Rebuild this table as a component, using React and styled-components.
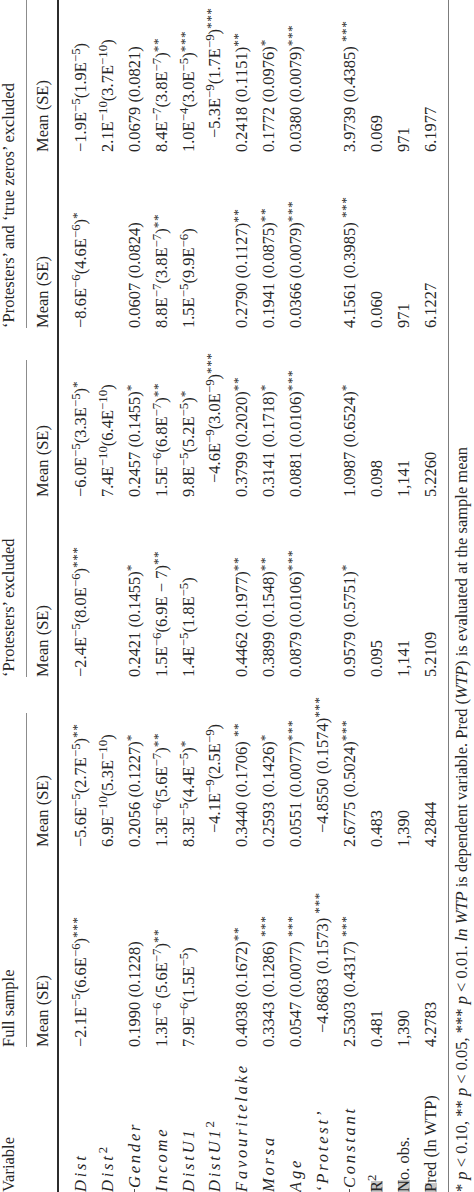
import React from 'react';
import styled, { createGlobalStyle } from 'styled-components';

const GlobalStyle = createGlobalStyle`
  html, body {
    margin: 0;
    padding: 0;
    background: #fff;
  }
  body {
    overflow: hidden;
  }
`;

// the table is printed sideways: build it upright (1192 x 474), then turn it a quarter left
const Page = styled.div`
  width: 474px;
  height: 1192px;
  overflow: hidden;
  background: #fff;
`;

const Sheet = styled.div`
  width: 1192px;
  height: 474px;
  transform-origin: 0 0;
  transform: translate(0, 1192px) rotate(-90deg);
  display: flex;
  flex-direction: column;
  font-family: 'Liberation Serif', 'Times New Roman', serif;
  font-size: 16.5px;
  color: #262626;
`;

const COLS = '145px 200px 170px 180px 169px 176px 152px';

const GroupRow = styled.div`
  display: grid;
  grid-template-columns: ${COLS};
  line-height: 18px;
`;

const GroupCell = styled.div`
  grid-column: ${p => p.$span};
  margin-right: ${p => p.$gap || 0}px;
  padding-bottom: 8px;
  border-bottom: 1px solid ${p => (p.$ruled ? '#8c8c8c' : 'transparent')};
  white-space: nowrap;
`;

const SubRow = styled.div`
  display: grid;
  grid-template-columns: ${COLS};
  line-height: 18px;
  padding: 7px 0 5px;
  border-bottom: 2px solid #2c2c2c;
  white-space: nowrap;
`;

const Body = styled.div`
  padding: 9px 0 3.4px;
  border-bottom: 1px solid #7c7c7c;
`;

const Row = styled.div`
  display: grid;
  grid-template-columns: ${COLS};
  height: 26.9px;
  line-height: 26.9px;
  white-space: nowrap;
`;

const Label = styled.div`
  font-style: ${p => (p.$math ? 'italic' : 'normal')};
  letter-spacing: ${p => (p.$math ? '2.8px' : '0')};
`;

const Cell = styled.div`
  padding-left: ${p => (p.$indent ? 14 : 0)}px;
`;

const Sup = styled.span`
  font-size: ${p => (p.$star ? '0.8em' : '0.78em')};
  vertical-align: ${p => (p.$star ? '0.4em' : '0.48em')};
  line-height: 0;
  letter-spacing: ${p => (p.$star ? '0.5px' : '0')};
  font-style: normal;
`;

const Smudge = styled.span`
  display: inline-block;
  height: 12px;
  line-height: 12px;
  background: #c6c6c6;
`;

const Tick = styled.span`
  display: inline-block;
  width: 3px;
  height: 1px;
  margin-right: 1px;
  vertical-align: 0.3em;
  background: #555;
`;

const Note = styled.div`
  margin-top: 3px;
  line-height: 20px;
  white-space: nowrap;

  i {
    font-style: italic;
  }
`;

const rows = [
  {
    label: 'Dist', math: true,
    cells: ['−2.1E^−5(6.6E^−6)^***', '−5.6E^−5(2.7E^−5)^**', '−2.4E^−5(8.0E^−6)^***', '−6.0E^−5(3.3E^−5)^*', '−8.6E^−6(4.6E^−6)^*', '−1.9E^−5(1.9E^−5)'],
  },
  {
    label: 'Dist', sup: '2', math: true,
    cells: ['', '6.9E^−10(5.3E^−10)', '', '7.4E^−10(6.4E^−10)', '', '2.1E^−10(3.7E^−10)'],
  },
  {
    label: 'Gender', math: true, mark: 'tick',
    cells: ['0.1990 (0.1228)', '0.2056 (0.1227)^*', '0.2421 (0.1455)^*', '0.2457 (0.1455)^*', '0.0607 (0.0824)', '0.0679 (0.0821)'],
  },
  {
    label: 'Income', math: true,
    cells: ['1.3E^−6 (5.6E^−7)^**', '1.3E^−6(5.6E^−7)^**', '1.5E^−6(6.9E − 7)^**', '1.5E^−6(6.8E^−7)^**', '8.8E^−7(3.8E^−7)^**', '8.4E^−7(3.8E^−7)^**'],
  },
  {
    label: 'DistU1', math: true,
    cells: ['7.9E^−6(1.5E^−5)', '8.3E^−5(4.4E^−5)^*', '1.4E^−5(1.8E^−5)', '9.8E^−5(5.2E^−5)^*', '1.5E^−5(9.9E^−6)', '1.0E^−4(3.0E^−5)^***'],
  },
  {
    label: 'DistU1', sup: '2', math: true, indent: true,
    cells: ['', '−4.1E^−9(2.5E^−9)', '', '−4.6E^−9(3.0E^−9)^***', '', '−5.3E^−9(1.7E^−9)^***'],
  },
  {
    label: 'Favouritelake', math: true,
    cells: ['0.4038 (0.1672)^**', '0.3440 (0.1706) ^**', '0.4462 (0.1977)^**', '0.3799 (0.2020)^**', '0.2790 (0.1127)^**', '0.2418 (0.1151)^**'],
  },
  {
    label: 'Morsa', math: true,
    cells: ['0.3343 (0.1286) ^***', '0.2593 (0.1426)^*', '0.3899 (0.1548)^**', '0.3141 (0.1718)^*', '0.1941 (0.0875)^**', '0.1772 (0.0976)^*'],
  },
  {
    label: 'Age', math: true,
    cells: ['0.0547 (0.0077) ^***', '0.0551 (0.0077)^***', '0.0879 (0.0106)^***', '0.0881 (0.0106)^***', '0.0366 (0.0079)^***', '0.0380 (0.0079)^***'],
  },
  {
    label: '‘Protest’', math: true, indent: true,
    cells: ['−4.8683 (0.1573) ^***', '−4.8550 (0.1574)^***', '', '', '', ''],
  },
  {
    label: 'Constant', math: true, mark: 'tick',
    cells: ['2.5303 (0.4317) ^***', '2.6775 (0.5024)^***', '0.9579 (0.5751)^*', '1.0987 (0.6524)^*', '4.1561 (0.3985) ^***', '3.9739 (0.4385) ^***'],
  },
  {
    label: 'R', sup: '2', mark: 'smudge',
    cells: ['0.481', '0.483', '0.095', '0.098', '0.060', '0.069'],
  },
  {
    label: 'No. obs.', mark: 'smudge',
    cells: ['1,390', '1,390', '1,141', '1,141', '971', '971'],
  },
  {
    label: 'Pred (ln WTP)', mark: 'smudge',
    cells: ['4.2783', '4.2844', '5.2109', '5.2260', '6.1227', '6.1977'],
  },
];

// "1.3E^−6(5.6E^−7)^**" -> text with raised exponents and stars
const renderValue = (text) =>
  text.split(/\^([−0-9*]+)/).map((part, i) =>
    i % 2 === 1 ? (
      <Sup key={i} $star={part.includes('*')}>{part}</Sup>
    ) : (
      <React.Fragment key={i}>{part}</React.Fragment>
    )
  );

const renderLabel = (row) => {
  let name = row.label;
  let lead = null;
  if (row.mark === 'smudge') {
    lead = <Smudge>{name[0]}</Smudge>;
    name = name.slice(1);
  } else if (row.mark === 'tick') {
    lead = <Tick />;
  }
  return (
    <Label $math={row.math}>
      {lead}
      {name}
      {row.sup && <Sup>{row.sup}</Sup>}
    </Label>
  );
};

const App = () => {
  return (
    <Page>
      <GlobalStyle />
      <Sheet>
        <GroupRow>
          <GroupCell $span="1 / 2">Variable</GroupCell>
          <GroupCell $span="2 / 4" $gap={36} $ruled>Full sample</GroupCell>
          <GroupCell $span="4 / 6" $gap={32} $ruled>‘Protesters’ excluded</GroupCell>
          <GroupCell $span="6 / 8" $ruled>‘Protesters’ and ‘true zeros’ excluded</GroupCell>
        </GroupRow>

        <SubRow>
          <div />
          {[0, 1, 2, 3, 4, 5].map(i => (
            <div key={i}>Mean (SE)</div>
          ))}
        </SubRow>

        <Body>
          {rows.map((row, r) => (
            <Row key={r}>
              {renderLabel(row)}
              {row.cells.map((value, c) => (
                <Cell key={c} $indent={row.indent}>
                  {renderValue(value)}
                </Cell>
              ))}
            </Row>
          ))}
        </Body>

        <Note>
          * <i>p</i> &lt; 0.10, ** <i>p</i> &lt; 0.05, *** <i>p</i> &lt; 0.01. <i>ln WTP</i> is dependent
          variable. Pred (<i>WTP</i>) is evaluated at the sample mean
        </Note>
      </Sheet>
    </Page>
  );
};

export default App;
